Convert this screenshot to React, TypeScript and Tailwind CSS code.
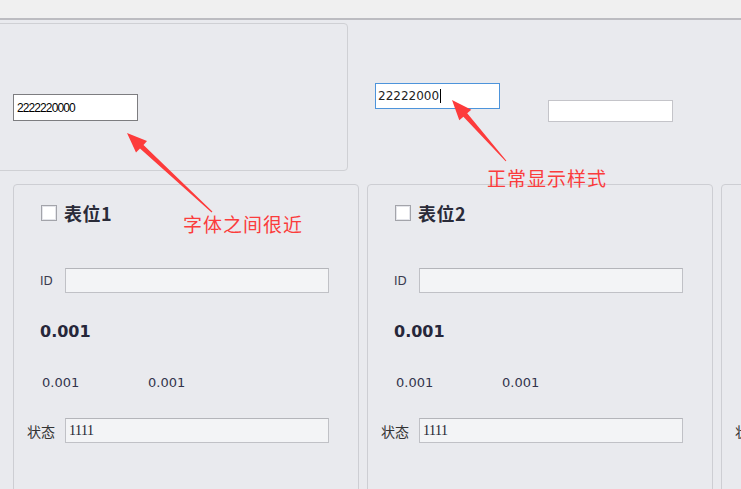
import React from "react";

const cjk = '"Noto Sans CJK SC", "Noto Sans", sans-serif';
const dv = '"DejaVu Sans", "Noto Sans CJK SC", sans-serif';

function Card({ n }: { n: number }) {
  return (
    <div className="w-[346px] h-[330px] shrink-0 rounded-[4px] border border-[#cdced3] bg-[#e9eaee] flex flex-col">
      <div className="mt-[20px] h-[16px] flex items-center pl-[27px] gap-[7px]">
        <div className="w-[16px] h-[16px] border border-[#a3a4aa] bg-white shadow-[inset_0_0_0_1px_#e4e5ea]" />
        <span className="text-[18px] font-bold text-[#2a2b38] leading-none tracking-[0.5px]" style={{ fontFamily: cjk }}>
          表位{n}
        </span>
      </div>
      <div className="mt-[47px] flex items-center h-[25px]">
        <span className="w-[51px] shrink-0 pl-[26px] text-[12px] text-[#3a3b50]" style={{ fontFamily: dv }}>
          ID
        </span>
        <div className="w-[264px] h-[25px] bg-[#f3f4f6] border border-[#c0c1c6] border-t-[#b4b5ba]" />
      </div>
      <div className="mt-[29px] h-[20px] flex items-center pl-[26px]">
        <span className="text-[16px] font-bold text-[#26273a] leading-none" style={{ fontFamily: dv }}>
          0.001
        </span>
      </div>
      <div className="mt-[33px] h-[16px] flex items-center pl-[28px] text-[13px] text-[#33344c]" style={{ fontFamily: dv }}>
        <span className="w-[106px] shrink-0">0.001</span>
        <span>0.001</span>
      </div>
      <div className="mt-[27px] flex items-center h-[25px]">
        <span className="w-[51px] shrink-0 pl-[13px] text-[14px] text-[#333] leading-none" style={{ fontFamily: cjk }}>
          状态
        </span>
        <div
          className="w-[264px] h-[25px] bg-[#f3f4f6] border border-[#c0c1c6] border-t-[#b4b5ba] flex items-center pl-[3px] text-[14px] text-[#1e1f33] tracking-[-0.5px]"
          style={{ fontFamily: '"Liberation Serif", serif' }}
        >
          1111
        </div>
      </div>
    </div>
  );
}

export default function App() {
  return (
    <div className="relative w-[741px] h-[489px] overflow-hidden bg-[#e9eaee]">
      <div className="h-[20px] bg-[#f0f0f0] border-b-2 border-[#bcbcc1]" />
      <div className="h-[164px] flex items-start">
        <div className="ml-[-6px] mt-[3px] w-[354px] h-[148px] shrink-0 rounded-[4px] border border-[#cfd0d4] bg-[#e9eaee] pl-[18px] pt-[70px]">
          <div
            className="w-[125px] h-[27px] bg-white border border-[#7d7d80] flex items-center pl-[3px] text-[12px] text-black tracking-[-0.9px]"
            style={{ fontFamily: '"Liberation Sans", sans-serif' }}
          >
            2222220000
          </div>
        </div>
        <div
          className="ml-[27px] mt-[63px] w-[125px] h-[26px] shrink-0 bg-white border border-[#4d94db] flex items-center pl-[2px] text-[12px] text-[#222]"
          style={{ fontFamily: dv }}
        >
          22222000
          <span className="ml-[1px] w-px h-[14px] bg-black" />
        </div>
        <div className="ml-[48px] mt-[80px] w-[125px] h-[22px] shrink-0 bg-white border border-[#c4c4c9]" />
      </div>
      <div className="flex gap-[8px] pl-[13px]">
        <Card n={1} />
        <Card n={2} />
        <Card n={3} />
      </div>

      <svg className="absolute left-0 top-0 pointer-events-none" width="741" height="489" viewBox="0 0 741 489">
        <polygon
          points="127,133 147,141 143.5,145 212.4,211.6 211.6,212.4 140,148.4 136,152.5"
          fill="#fd3b3b"
        />
        <polygon
          points="452,100 471.3,109.7 467.2,113.3 506.4,160.7 505.6,161.3 463.4,116.7 459.3,120.3"
          fill="#fd3b3b"
        />
      </svg>
      <div
        className="absolute left-[183px] top-[213px] text-[19px] leading-[22px] tracking-[1px] text-[#fb3c3c]"
        style={{ fontFamily: cjk }}
      >
        字体之间很近
      </div>
      <div
        className="absolute left-[487px] top-[167px] text-[19px] leading-[22px] tracking-[1px] text-[#fb3c3c]"
        style={{ fontFamily: cjk }}
      >
        正常显示样式
      </div>
    </div>
  );
}
